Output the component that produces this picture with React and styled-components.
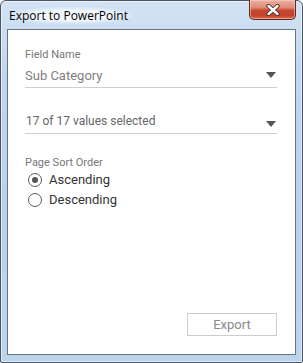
import React, { useState } from 'react';
import styled, { createGlobalStyle } from 'styled-components';

const GlobalStyle = createGlobalStyle`
  html, body {
    margin: 0;
    padding: 0;
    background: #ffffff;
  }
`;

const Window = styled.div`
  box-sizing: border-box;
  width: 303px;
  height: 363px;
  border: 1px solid #4a5561;
  border-radius: 6px 6px 2px 2px;
  background: linear-gradient(180deg, #d3e3f4 0%, #c0d6ee 20%, #b9d1ea 60%, #bcd4ec 100%);
  box-shadow: inset 0 0 0 1px rgba(255, 255, 255, 0.55);
  display: flex;
  flex-direction: column;
  padding: 0 6px 7px 6px;
`;

const TitleBar = styled.div`
  height: 28px;
  display: flex;
  align-items: flex-start;
  justify-content: space-between;
`;

const Title = styled.span`
  margin-top: 6px;
  margin-left: 2px;
  padding: 0 6px 0 0;
  font-family: 'Open Sans', 'Liberation Sans', sans-serif;
  font-size: 12px;
  color: #000;
  background: radial-gradient(ellipse at center, rgba(255, 255, 255, 0.75) 40%, rgba(255, 255, 255, 0) 75%);
`;

const CloseButton = styled.button`
  box-sizing: border-box;
  width: 47px;
  height: 20px;
  margin: -1px 0 0 0;
  padding: 0;
  border: 1px solid #5a2a20;
  border-top: none;
  border-radius: 0 0 5px 5px;
  background: linear-gradient(180deg, #eab1a3 0%, #de8a74 40%, #c8472d 55%, #c0432a 80%, #d8664a 100%);
  box-shadow: inset 0 0 0 1px rgba(255, 210, 200, 0.55);
  display: flex;
  align-items: center;
  justify-content: center;
  cursor: pointer;
`;

const Content = styled.div`
  flex: 1;
  display: flex;
  flex-direction: column;
  background: #fff;
  border: 1px solid #6c7278;
  padding: 18px 18px 18px 17px;
  font-family: Roboto, 'Open Sans', sans-serif;
`;

const Label = styled.div`
  font-size: 11px;
  line-height: 14px;
  color: #777;
`;

const Select = styled.div`
  display: flex;
  align-items: center;
  justify-content: space-between;
  border-bottom: 1px solid #cfcfcf;
  height: ${(p) => p.$h}px;
  margin-top: ${(p) => p.$mt}px;
  padding-top: ${(p) => p.$pt || 0}px;
  box-sizing: border-box;
`;

const SelectText = styled.span`
  font-size: ${(p) => p.$size}px;
  color: ${(p) => p.$color};
  padding-left: ${(p) => p.$pl || 0}px;
`;

const Caret = styled.span`
  width: 0;
  height: 0;
  border-left: 5px solid transparent;
  border-right: 5px solid transparent;
  border-top: 6px solid #555;
  margin-right: 1px;
  margin-top: ${(p) => p.$mt || 0}px;
`;

const Section = styled.div`
  margin-top: 22px;
`;

const RadioList = styled.div`
  display: flex;
  flex-direction: column;
  gap: 6px;
  margin-top: 3px;
  padding-left: 3px;
`;

const RadioRow = styled.label`
  display: flex;
  align-items: center;
  gap: 7px;
  font-size: 13px;
  line-height: 14px;
  color: #333;
  cursor: pointer;
`;

const RadioCircle = styled.span`
  box-sizing: border-box;
  width: 14px;
  height: 14px;
  border-radius: 50%;
  border: 1px solid #5a5a5a;
  background: #fff;
  display: flex;
  align-items: center;
  justify-content: center;

  &::after {
    content: '';
    width: 6px;
    height: 6px;
    border-radius: 50%;
    background: ${(p) => (p.$on ? '#555' : 'transparent')};
  }
`;

const Footer = styled.div`
  margin-top: auto;
  display: flex;
  justify-content: flex-end;
`;

const ExportButton = styled.button`
  box-sizing: border-box;
  width: 90px;
  height: 23px;
  border: 1px solid #cccccc;
  background: #fff;
  color: #8a8a8a;
  font-family: Roboto, 'Open Sans', sans-serif;
  font-size: 13px;
  padding: 0;
`;

export default function App() {
  const [order, setOrder] = useState('asc');

  return (
    <>
      <GlobalStyle />
      <Window>
        <TitleBar>
          <Title>Export to PowerPoint</Title>
          <CloseButton aria-label="Close">
            <svg width="14" height="12" viewBox="0 0 14 12">
              <path d="M2.5 2 L11.5 10 M11.5 2 L2.5 10" stroke="#4a2a24" strokeWidth="4.2" strokeLinecap="round" />
              <path d="M2.5 2 L11.5 10 M11.5 2 L2.5 10" stroke="#ffffff" strokeWidth="2.4" strokeLinecap="round" />
            </svg>
          </CloseButton>
        </TitleBar>
        <Content>
          <Label>Field Name</Label>
          <Select $h={24} $mt={2}>
            <SelectText $size={13} $color="#808080">Sub Category</SelectText>
            <Caret $mt={-2} />
          </Select>
          <Select $h={34} $mt={12} $pt={8}>
            <SelectText $size={12} $color="#666" $pl={1}>17 of 17 values selected</SelectText>
            <Caret $mt={6} />
          </Select>
          <Section>
            <Label>Page Sort Order</Label>
            <RadioList>
              <RadioRow onClick={() => setOrder('asc')}>
                <RadioCircle $on={order === 'asc'} />
                Ascending
              </RadioRow>
              <RadioRow onClick={() => setOrder('desc')}>
                <RadioCircle $on={order === 'desc'} />
                Descending
              </RadioRow>
            </RadioList>
          </Section>
          <Footer>
            <ExportButton disabled>Export</ExportButton>
          </Footer>
        </Content>
      </Window>
    </>
  );
}
